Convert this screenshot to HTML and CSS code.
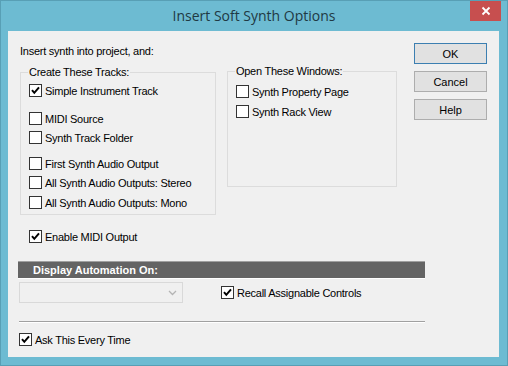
FILE: index.html
```html
<!DOCTYPE html>
<html lang="en">
<head>
  <meta charset="UTF-8">
  <title>Insert Soft Synth Options</title>
  <link rel="stylesheet" href="styles.css">
</head>
<body>
  <div class="window">
    <!-- title bar -->
    <div class="titlebar">
      <span></span>
      <span class="title">Insert Soft Synth Options</span>
      <button class="close" aria-label="Close">
        <svg width="10" height="10" viewBox="0 0 10 10"><path d="M1.5 1.5 L8.5 8.5 M8.5 1.5 L1.5 8.5" stroke="#fff" stroke-width="1.8" fill="none"/></svg>
      </button>
    </div>

    <div class="client">
      <div class="top">
        <div class="main">
          <div class="intro">Insert synth into project, and:</div>
          <div class="groups">
            <div class="group tracks">
              <div class="legend">Create These Tracks:</div>
              <label class="check r1"><span class="box on"><svg viewBox="0 0 11 11"><polyline points="2,5.2 4.3,7.8 9,2.4"/></svg></span>Simple Instrument Track</label>
              <label class="check r2"><span class="box"></span>MIDI Source</label>
              <label class="check"><span class="box"></span>Synth Track Folder</label>
              <label class="check r4"><span class="box"></span>First Synth Audio Output</label>
              <label class="check"><span class="box"></span>All Synth Audio Outputs: Stereo</label>
              <label class="check r6"><span class="box"></span>All Synth Audio Outputs: Mono</label>
            </div>
            <div class="group windows">
              <div class="legend">Open These Windows:</div>
              <label class="check w1"><span class="box"></span>Synth Property Page</label>
              <label class="check w2"><span class="box"></span>Synth Rack View</label>
            </div>
          </div>
        </div>
        <div class="buttons">
          <button class="btn default">OK</button>
          <button class="btn">Cancel</button>
          <button class="btn">Help</button>
        </div>
      </div>

      <div class="bottom">
        <label class="check midi"><span class="box on"><svg viewBox="0 0 11 11"><polyline points="2,5.2 4.3,7.8 9,2.4"/></svg></span>Enable MIDI Output</label>

        <div class="bar">Display Automation On:</div>

        <div class="combo-row">
          <div class="combo">
            <svg width="9" height="6" viewBox="0 0 9 6"><polyline points="1,1 4.5,4.5 8,1" fill="none" stroke="#b4b4b4" stroke-width="1.3"/></svg>
          </div>
          <label class="check"><span class="box on"><svg viewBox="0 0 11 11"><polyline points="2,5.2 4.3,7.8 9,2.4"/></svg></span>Recall Assignable Controls</label>
        </div>

        <div class="separator"></div>

        <label class="check ask"><span class="box on"><svg viewBox="0 0 11 11"><polyline points="2,5.2 4.3,7.8 9,2.4"/></svg></span>Ask This Every Time</label>
      </div>
    </div>
  </div>
</body>
</html>
```

FILE: styles.css
```css
body {
  margin: 0;
  font-family: "Liberation Sans", Arial, sans-serif;
  font-size: 11px;
  letter-spacing: -0.25px;
  color: #000;
}

/* window frame */
.window {
  width: 508px;
  height: 366px;
  box-sizing: border-box;
  background: #6dbbd2;
  border: 1px solid #589fb5;
  padding: 0 8px 8px 7px;
}

.titlebar {
  height: 30px;
  margin: 0 -8px 0 -7px;
  display: grid;
  grid-template-columns: 1fr auto 1fr;
}

.title {
  font-family: "Open Sans", "Noto Sans", sans-serif;
  font-size: 14px;
  letter-spacing: 0;
  line-height: 30px;
  color: #1f3943;
}

.close {
  justify-self: end;
  width: 31px;
  height: 20px;
  margin-right: 6px;
  padding: 0;
  border: none;
  background: #c74f4f;
  display: flex;
  align-items: center;
  justify-content: center;
}

/* dialog body */
.client {
  height: 326px;
  background: #f0f0f0;
  padding: 12px 0 0 10px;
  box-sizing: border-box;
}

.top {
  display: flex;
  margin-left: 2px;
}

.main {
  width: 377px;
  padding-top: 2px;
}

.intro {
  line-height: 13px;
}

.groups {
  display: flex;
  align-items: flex-start;
  gap: 11px;
  margin-top: 14px;
}

.group {
  border: 1px solid #dcdcdc;
  box-sizing: border-box;
  padding-left: 8px;
}

.tracks {
  width: 197px;
  height: 143px;
}

.windows {
  width: 171px;
  height: 116px;
  margin-top: -1px;
}

.legend {
  width: fit-content;
  margin: -7px 0 0 -1px;
  padding: 0 1px;
  background: #f0f0f0;
  line-height: 13px;
}

/* checkboxes */
.check {
  display: flex;
  align-items: center;
  gap: 3px;
  height: 19px;
  white-space: nowrap;
}

.box {
  width: 13px;
  height: 13px;
  box-sizing: border-box;
  border: 1px solid #333;
  background: #fff;
  flex: none;
}

.box svg {
  display: block;
  width: 11px;
  height: 11px;
  fill: none;
  stroke: #000;
  stroke-width: 2;
}

.r1 { margin-top: 2px; }
.r2 { margin-top: 9px; }
.r4 { margin-top: 7px; }
.r6 { margin-top: 1px; }
.w1 { margin-top: 4px; }
.w2 { margin-top: 1px; }

/* buttons */
.buttons {
  display: flex;
  flex-direction: column;
  gap: 7px;
  margin-left: 17px;
}

.btn {
  width: 73px;
  height: 21px;
  padding: 0;
  font-family: inherit;
  font-size: 11px;
  color: #000;
  background: #e1e1e1;
  border: 1px solid #adadad;
}

.btn.default {
  border-color: #3c7fb1;
}

/* lower part */
.midi {
  margin: 12px 0 0 11px;
}

.bar {
  width: 392px;
  margin-top: 15px;
  height: 16px;
  line-height: 16px;
  background: #646464;
  border-top: 1px solid #a0a0a0;
  border-bottom: 1px solid #fff;
  color: #fff;
  font-weight: bold;
  letter-spacing: 0;
  padding-left: 15px;
}

.combo-row {
  display: flex;
  align-items: center;
  gap: 38px;
  margin: 3px 0 0 1px;
}

.combo {
  width: 164px;
  height: 21px;
  box-sizing: border-box;
  border: 1px solid #d9d9d9;
  display: flex;
  align-items: center;
  justify-content: flex-end;
  padding-right: 5px;
}

.separator {
  width: 406px;
  margin: 18px 0 0 1px;
  border-top: 1px solid #a0a0a0;
  border-bottom: 1px solid #fff;
}

.ask {
  margin: 7px 0 0 1px;
}
```
